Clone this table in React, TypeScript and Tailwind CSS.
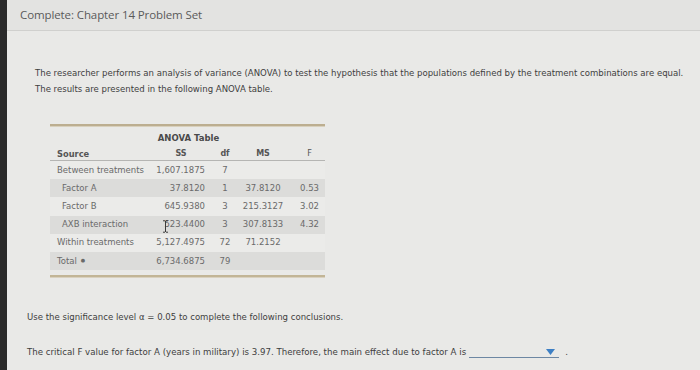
import React from 'react';

const rows = [
  { source: 'Between treatments', ss: '1,607.1875', df: '7', ms: '', f: '', indent: false, shade: false },
  { source: 'Factor A', ss: '37.8120', df: '1', ms: '37.8120', f: '0.53', indent: true, shade: true },
  { source: 'Factor B', ss: '645.9380', df: '3', ms: '215.3127', f: '3.02', indent: true, shade: false },
  { source: 'AXB interaction', ss: '523.4400', df: '3', ms: '307.8133', f: '4.32', indent: true, shade: true },
  { source: 'Within treatments', ss: '5,127.4975', df: '72', ms: '71.2152', f: '', indent: false, shade: false },
  { source: 'Total', ss: '6,734.6875', df: '79', ms: '', f: '', indent: false, shade: true },
];

export default function App() {
  return (
    <div className="w-[700px] h-[370px] flex overflow-hidden bg-[#e9e9e7] font-['DejaVu_Sans',sans-serif]">
      {/* dark window edge */}
      <div className="w-[7px] bg-[#2a2a2a]" />

      <div className="flex-1 flex flex-col">
        {/* Header */}
        <div className="h-[31px] shrink-0 flex items-center pl-[13px] bg-[#e3e3e1] border-b border-[#d0d0ce]">
          <span className="font-['Open_Sans',sans-serif] text-[11.5px] text-[#5a5a5a] tracking-[-0.1px]">
            Complete: Chapter 14 Problem Set
          </span>
        </div>

        {/* Body */}
        <div className="pt-[34px]">
          <div className="pl-[28px] text-[8.55px] leading-[16px] text-[#3e3e3e]">
            <p>The researcher performs an analysis of variance (ANOVA) to test the hypothesis that the populations defined by the treatment combinations are equal.</p>
            <p>The results are presented in the following ANOVA table.</p>
          </div>

          {/* ANOVA table */}
          <div className="ml-[43px] mt-[27px] w-[275px] text-[8.5px] text-[#6a6a6a]">
            <div className="h-[3px] bg-[#bcae90] border-b border-[#d8d0bd]" />
            <div className="h-[19px] mt-[2px] flex items-center justify-center pl-[2px]">
              <span className="font-bold text-[8.5px] text-[#4a4a4a]">ANOVA Table</span>
            </div>
            <div className="grid grid-cols-[100px_62px_28px_50px_35px] h-[13px] items-center border-b border-[#b5b5b3] font-bold text-[8px] text-[#555]">
              <span className="pl-[7px] text-[8.3px]">Source</span>
              <span className="text-center">SS</span>
              <span className="text-center pr-[2px]">df</span>
              <span className="text-center pr-[4px]">MS</span>
              <span className="text-center pl-[4px] font-normal">F</span>
            </div>
            {rows.map(r => (
              <div
                key={r.source}
                className={`relative grid grid-cols-[100px_62px_28px_50px_35px] h-[18.2px] items-center ${r.shade ? 'bg-[#dcdcda]' : 'bg-[#ebebe9]'}`}
              >
                <span className={r.indent ? 'pl-[12px]' : 'pl-[7px]'}>
                  {r.source}
                  {r.source === 'Total' && <span className="ml-[4px] text-[5px] align-middle">●</span>}
                </span>
                <span className="text-right pr-[7px]">{r.ss}</span>
                <span className="text-center pr-[2px]">{r.df}</span>
                <span className="text-center pr-[4px]">{r.ms}</span>
                <span className="text-center pl-[4px]">{r.f}</span>
                {r.source === 'AXB interaction' && (
                  <svg className="absolute left-[112px] top-[4px]" width="7" height="13" viewBox="0 0 7 13">
                    <path d="M1 0.8 H3 M4 0.8 H6 M3.5 1 V12 M1 12.2 H3 M4 12.2 H6" stroke="#3a3a3a" strokeWidth="1" fill="none" />
                  </svg>
                )}
              </div>
            ))}
            <div className="h-[5px]" />
            <div className="h-[3px] bg-[#c2b596] border-b border-[#d9d1bf]" />
          </div>

          <p className="pl-[20px] mt-[31px] text-[8.55px] leading-[16px] text-[#3e3e3e]">
            Use the significance level α = 0.05 to complete the following conclusions.
          </p>

          <div className="pl-[20px] mt-[19px] flex items-end text-[8.65px] leading-[16px] text-[#3e3e3e]">
            <span>The critical F value for factor A (years in military) is 3.97. Therefore, the main effect due to factor A is</span>
            <span className="ml-[3px] mb-[2px] w-[90px] h-[12px] border-b border-[#6d87a3] flex items-center justify-end pr-[4px]">
              <svg width="9" height="6" viewBox="0 0 9 6">
                <path d="M0 0 H9 L4.5 6 Z" fill="#3d7fc4" />
              </svg>
            </span>
            <span className="ml-[6px]">.</span>
          </div>
        </div>
      </div>
    </div>
  );
}
